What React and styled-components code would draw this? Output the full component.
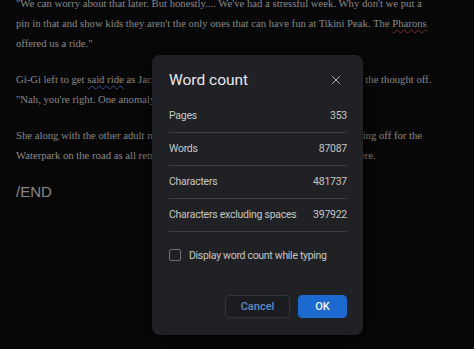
import React from 'react'
import styled, { createGlobalStyle } from 'styled-components'
import { X } from 'lucide-react'

const Global = createGlobalStyle`
    html, body {
        margin: 0;
        padding: 0;
        background: #070707;
        overflow: hidden;
    }
`;

const Page = styled.div`
    position: relative;
    width: 474px;
    height: 349px;
    overflow: hidden;
    background: #070707;
`;

const Doc = styled.div`
    display: flex;
    flex-direction: column;
    gap: 16px;
    padding: 0 16px;
    margin-top: -7px;
    font-family: 'Liberation Serif', 'Times New Roman', serif;
    font-size: 10.7px;
    color: #888;
`;

const Para = styled.div`
    display: flex;
    flex-direction: column;
`;

const Line = styled.div`
    height: 20px;
    line-height: 20px;
    white-space: nowrap;
`;

const Squiggle = styled.span`
    text-decoration: underline wavy ${p => p.$color};
    text-decoration-thickness: 1px;
    text-underline-offset: 2px;
`;

const End = styled.div`
    font-family: 'Liberation Sans', Arial, sans-serif;
    font-size: 15px;
    line-height: 22px;
    color: #888;
`;

const Dialog = styled.div`
    position: absolute;
    left: 152px;
    top: 55px;
    width: 211px;
    height: 280px;
    box-sizing: border-box;
    padding: 0 16px 17px 17px;
    background: #202124;
    border-radius: 8px;
    box-shadow: 0 4px 18px rgba(0, 0, 0, 0.7);
    display: flex;
    flex-direction: column;
    font-family: Roboto, 'Noto Sans', sans-serif;
`;

const Header = styled.div`
    height: 45px;
    padding-top: 5px;
    box-sizing: border-box;
    display: flex;
    align-items: center;
    justify-content: space-between;
`;

const Title = styled.div`
    font-size: 15.5px;
    color: #e8eaed;
`;

const CloseButton = styled.div`
    display: flex;
    align-items: center;
    justify-content: center;
    width: 16px;
    height: 16px;
    margin-right: 3px;
    color: #bdc1c6;
`;

const Row = styled.div`
    height: 33px;
    box-sizing: border-box;
    display: flex;
    align-items: center;
    justify-content: space-between;
    border-bottom: 1px solid #3c4043;
    font-size: 10.5px;
    letter-spacing: -0.25px;
    color: #c4c7c5;
    padding-bottom: 1px;
`;

const CheckRow = styled.label`
    display: flex;
    align-items: center;
    gap: 8px;
    margin-top: 16px;
    height: 14px;
    font-size: 10.5px;
    letter-spacing: -0.3px;
    color: #c4c7c5;
`;

const Box = styled.span`
    width: 10px;
    height: 10px;
    border: 1.5px solid #6b6e72;
    border-radius: 2px;
`;

const Actions = styled.div`
    margin-top: auto;
    display: flex;
    justify-content: flex-end;
    gap: 8px;
`;

const Button = styled.div`
    height: 23px;
    box-sizing: border-box;
    width: ${p => p.$width}px;
    display: flex;
    align-items: center;
    justify-content: center;
    border-radius: 4px;
    font-size: 11px;
    font-weight: 500;
    color: ${p => (p.$primary ? '#f1f3f4' : '#5b8bcb')};
    background: ${p => (p.$primary ? '#1c6ad0' : '#1b1c1f')};
    border: 1px solid ${p => (p.$primary ? '#1c6ad0' : '#33363a')};
`;

const stats = [
    ['Pages', '353'],
    ['Words', '87087'],
    ['Characters', '481737'],
    ['Characters excluding spaces', '397922'],
]

export default function App() {
    return (
        <Page>
            <Global />
            <Doc>
                <Para>
                    <Line>"We can worry about that later. But honestly.... We've had a stressful week. Why don't we put a</Line>
                    <Line>pin in that and show kids they aren't the only ones that can have fun at Tikini Peak. The <Squiggle $color="#7a2a2a">Pharons</Squiggle></Line>
                    <Line>offered us a ride."</Line>
                </Para>
                <Para>
                    <Line>Gi-Gi left to get <Squiggle $color="#3a4a90">said ride</Squiggle> as Jacob stood there for a long moment, before shaking the thought off.</Line>
                    <Line>"Nah, you're right. One anomaly at a time."</Line>
                </Para>
                <Para>
                    <Line>She along with the other adult members of the rescue group were soon after heading off for the</Line>
                    <Line>Waterpark on the road as all remaining worries were soon left far behind back there.</Line>
                </Para>
                <End>/END</End>
            </Doc>

            <Dialog>
                <Header>
                    <Title>Word count</Title>
                    <CloseButton><X size={14} strokeWidth={1.6} /></CloseButton>
                </Header>
                {stats.map(([label, value]) => (
                    <Row key={label}>
                        <span>{label}</span>
                        <span>{value}</span>
                    </Row>
                ))}
                <CheckRow>
                    <Box />
                    Display word count while typing
                </CheckRow>
                <Actions>
                    <Button $width={65}>Cancel</Button>
                    <Button $width={49} $primary>OK</Button>
                </Actions>
            </Dialog>
        </Page>
    )
}
